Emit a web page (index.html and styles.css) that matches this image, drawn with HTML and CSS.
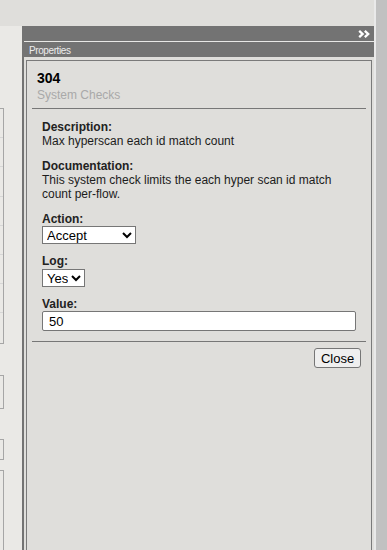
FILE: index.html
```html
<!doctype html>
<html>
<head>
<title>Properties</title>
<link rel="stylesheet" href="styles.css">
</head>
<body>
<div class="page">
	<div class="list">
		<div class="row"></div>
		<div class="row"></div>
		<div class="row"></div>
		<div class="row"></div>
		<div class="row"></div>
		<div class="row"></div>
		<div class="row"></div>
		<div class="row"></div>
	</div>
	<div class="list list-b"></div>
	<div class="list list-c"></div>
	<div class="list list-d"></div>
</div>
<div class="panel">
	<div class="titlebar">
		<svg class="collapse" width="13" height="8" viewBox="0 0 13 8">
			<path d="M1.2 0.8 L4.6 4 L1.2 7.2 M6.8 0.8 L10.2 4 L6.8 7.2" fill="none" stroke="#fff" stroke-width="2.3"/>
		</svg>
	</div>
	<div class="section-title">Properties</div>
	<div class="box">
		<div class="head">
			<h1>304</h1>
			<div class="subtitle">System Checks</div>
		</div>
		<div class="fields">
			<div class="field">
				<label>Description:</label>
				<div class="text">Max hyperscan each id match count</div>
			</div>
			<div class="field">
				<label>Documentation:</label>
				<div class="text">This system check limits the each hyper scan id match count per-flow.</div>
			</div>
			<div class="field">
				<label>Action:</label>
				<select class="action">
					<option>Accept</option>
					<option>Drop</option>
				</select>
			</div>
			<div class="field field-log">
				<label>Log:</label>
				<select class="log">
					<option>Yes</option>
					<option>No</option>
				</select>
			</div>
			<div class="field field-value">
				<label>Value:</label>
				<input type="text" class="value" value="50">
			</div>
		</div>
		<div class="buttons">
			<button>Close</button>
		</div>
	</div>
</div>
<div class="gutter"></div>
<div class="scrollbar"></div>
</body>
</html>
```

FILE: styles.css
```css
* {
	box-sizing: border-box;
	font-family: "Liberation Sans", Arial, sans-serif;
	margin: 0;
	padding: 0;
}

body {
	background: #dfdedb;
	display: flex;
	height: 550px;
	overflow: hidden;
}

/* page behind the panel */
.page {
	background: #eae9e6;
	margin-top: 26px;
	padding-top: 82px;
	width: 22px;
}

.list {
	border: 1px solid #a6a6a6;
	border-left: 0;
	width: 4px;
}

.row {
	border-bottom: 1px solid #d6d6d6;
	height: 29.2px;
}

.row:last-child {
	border-bottom: 0;
}

.list-b {
	height: 34px;
	margin-top: 31px;
}

.list-c {
	height: 21px;
	margin-top: 30px;
}

.list-d {
	border-bottom: 0;
	height: 100px;
	margin-top: 10px;
}

/* properties panel */
.panel {
	border-left: 2px solid #737373;
	display: flex;
	flex-direction: column;
	margin-top: 26px;
	width: 352px;
}

.titlebar {
	align-items: center;
	background: #737373;
	border-bottom: 1px solid #e8e8e6;
	display: flex;
	height: 16px;
	justify-content: flex-end;
	padding-right: 3px;
}

.section-title {
	background: #737373;
	color: #ececec;
	font-size: 10px;
	height: 15px;
	letter-spacing: -0.4px;
	line-height: 18px;
	padding-left: 5px;
}

.box {
	border: 1px solid #7a7a7a;
	border-bottom: 0;
	flex: 1;
	margin: 3px 2px 0 2px;
}

.head {
	border-bottom: 1px solid #777;
	margin: 0 5px;
	padding: 9px 0 6px 5px;
}

h1 {
	color: #000;
	font-size: 14px;
	line-height: 16px;
}

.subtitle {
	color: #a9a9a9;
	font-size: 12px;
	line-height: 13px;
	margin-top: 3px;
}

.fields {
	border-bottom: 1px solid #777;
	margin: 0 5px;
	padding: 0 10px 10px 10px;
}

.field {
	font-size: 12px;
	line-height: 14px;
	padding-top: 11px;
}

.field label {
	color: #222;
	display: block;
	font-weight: bold;
}

.text {
	color: #1c1c1c;
}

select, input, button {
	font-size: 13px;
}

select {
	background: #fff;
	border: 1px solid #767676;
	color: #000;
	display: block;
	height: 18px;
}

.action {
	width: 94px;
}

.field-log {
	padding-top: 10px;
}

.log {
	margin-top: 1px;
	width: 43px;
}

.field-value {
	padding-top: 10px;
}

.value {
	background: #fff;
	border: 1px solid #767676;
	border-radius: 2px;
	display: block;
	height: 20px;
	padding: 0 6px;
	width: 314px;
}

.buttons {
	display: flex;
	justify-content: flex-end;
	padding: 6px 10px 0 0;
}

button {
	background: #efefef;
	border: 1px solid #767676;
	border-radius: 3px;
	color: #000;
	height: 20px;
	width: 47px;
}

.gutter {
	background: #e9e9e9;
	width: 2px;
}

.scrollbar {
	background: #c1c1c1;
	width: 11px;
}
```
